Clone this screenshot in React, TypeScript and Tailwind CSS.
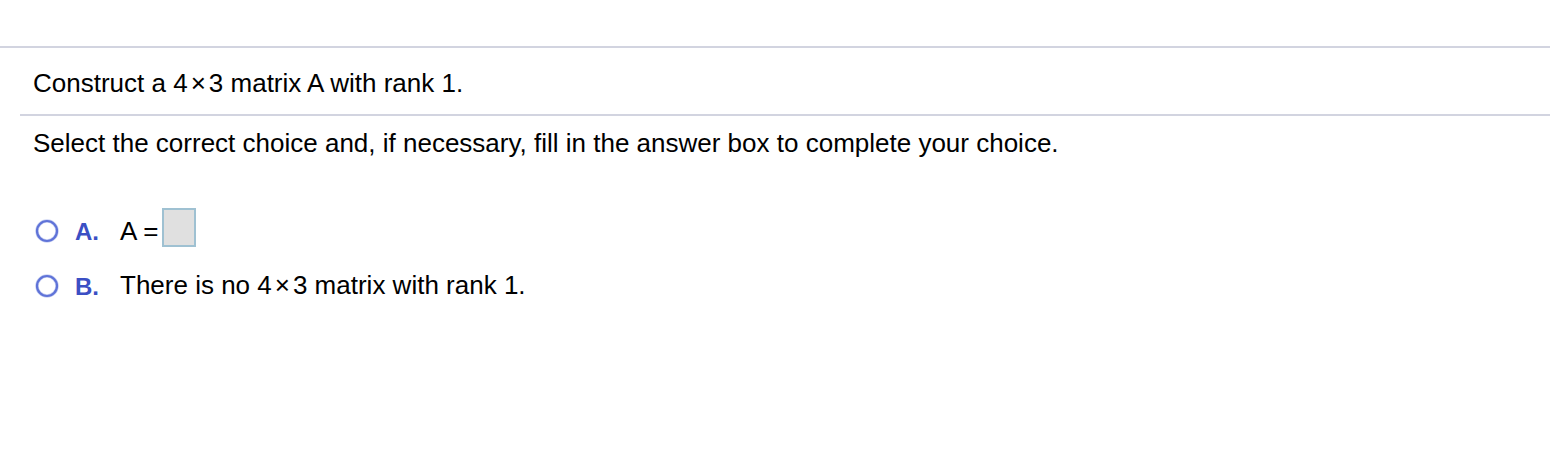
import React from "react";

function Radio({ className = "" }: { className?: string }) {
  return (
    <svg width="24" height="24" viewBox="0 0 24 24" className={"shrink-0 " + className}>
      <circle cx="12" cy="12" r="10" fill="white" stroke="#ccd3f3" strokeWidth="3.5" />
      <circle cx="12" cy="12" r="10" fill="none" stroke="#5f73d8" strokeWidth="2.2" />
    </svg>
  );
}

export default function App() {
  return (
    <div
      className="w-[1550px] h-[474px] bg-white text-black"
      style={{ fontFamily: '"Liberation Sans", Arial, sans-serif' }}
    >
      <div className="h-[46px]" />
      <div className="border-t-2 border-[#d2d4e0]">
        <div className="pl-[33px] h-[66px] pt-[22px] text-[26px] leading-[26px]">
          Construct a 4<span className="mx-[3px]">×</span>3 matrix A with rank 1.
        </div>
        <div className="ml-[20px] border-t-2 border-[#d2d4e0]">
          <div className="pl-[13px] pt-[14px] text-[26px] leading-[26px]">
            Select the correct choice and, if necessary, fill in the answer box to complete your choice.
          </div>
          <div className="pl-[15px] pt-[52px] flex flex-col gap-[23px]">
            <div className="flex items-start h-[39px]">
              <Radio className="mt-[11px]" />
              <span className="mt-[12px] ml-[16px] w-[45px] text-[24px] leading-[24px] font-bold text-[#3b4fc4]">
                A.
              </span>
              <span className="mt-[10px] text-[26px] leading-[26px]">A =</span>
              <span className="ml-[4px] w-[34px] h-[39px] bg-[#e0e0e0] border-2 border-[#9fc1d2]" />
            </div>
            <div className="flex items-start h-[30px]">
              <Radio className="mt-[4px]" />
              <span className="mt-[5px] ml-[16px] w-[45px] text-[24px] leading-[24px] font-bold text-[#3b4fc4]">
                B.
              </span>
              <span className="mt-[2px] text-[26px] leading-[26px]">
                There is no 4<span className="mx-[3px]">×</span>3 matrix with rank 1.
              </span>
            </div>
          </div>
        </div>
      </div>
    </div>
  );
}
